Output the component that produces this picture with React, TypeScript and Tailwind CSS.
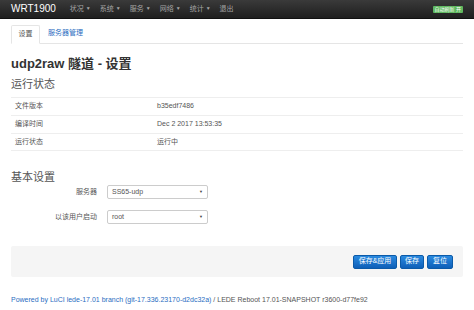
const font = { fontFamily: '"Liberation Sans", "Noto Sans CJK SC", sans-serif' };

const menu = ["状况", "系统", "服务", "网络", "统计"];

function Caret() {
  return <span className="ml-[2px] text-[5px] align-middle">▼</span>;
}

function Select({ value }: { value: string }) {
  return (
    <div className="flex h-[14px] w-[101px] items-center justify-between rounded-[2px] border border-[#ccc] bg-white px-[4px] text-[7px] text-[#555]">
      <span>{value}</span>
      <span className="text-[4px] text-[#444]">▼</span>
    </div>
  );
}

export default function App() {
  const rows = [
    ["文件版本", "b35edf7486"],
    ["编译时间", "Dec 2 2017 13:53:35"],
    ["运行状态", "运行中"],
  ];

  return (
    <div className="h-[310px] w-[474px] overflow-hidden bg-white text-[#333]" style={font}>
      {/* Navbar */}
      <div className="flex h-[19px] items-center border-b border-[#111] bg-gradient-to-b from-[#3a3a3a] to-[#1f1f1f] px-[11px]">
        <span className="mr-[14px] text-[10px] leading-none text-white">WRT1900</span>
        <div className="flex gap-[9px] text-[7px] text-[#a5a5a5]">
          {menu.map((m) => (
            <span key={m}>
              {m}
              <Caret />
            </span>
          ))}
          <span>退出</span>
        </div>
        <span className="ml-auto rounded-[1px] bg-[#5fb85f] px-[2px] text-[5px] leading-[7px] text-white">自动刷新 开</span>
      </div>

      <div className="px-[11px]">
        {/* Tabs */}
        <div className="mt-[6px] flex h-[19px] items-end border-b border-[#e5e5e5] text-[7px]">
          <div className="-mb-px flex h-[19px] w-[29px] items-center justify-center rounded-t-[2px] border border-b-white border-[#e5e5e5] bg-white text-[#555]">
            设置
          </div>
          <div className="flex h-[19px] items-center pl-[8px] text-[#2a6dbf]">服务器管理</div>
        </div>

        {/* Title */}
        <div className="mt-[12px] text-[13px] font-bold leading-[16px] text-[#333]">udp2raw 隧道 - 设置</div>

        <div className="mt-[6px] text-[11px] leading-[13px] text-[#555]">运行状态</div>

        <div className="mt-[6px] text-[7px] text-[#555]">
          {rows.map(([k, v], i) => (
            <div key={k} className={`flex h-[18px] items-center ${i < 2 ? "border-t border-[#eeeeee]" : "border-y border-[#eeeeee]"}`}>
              <span className="w-[146px] pl-[4px]">{k}</span>
              <span>{v}</span>
            </div>
          ))}
        </div>

        <div className="mt-[20px] text-[11px] leading-[13px] text-[#555]">基本设置</div>

        <div className="mt-[1px] flex flex-col gap-[11px] text-[7px] text-[#555]">
          <div className="flex items-center">
            <span className="w-[86px] text-right">服务器</span>
            <div className="ml-[10px]">
              <Select value="SS65-udp" />
            </div>
          </div>
          <div className="flex items-center">
            <span className="w-[86px] text-right">以该用户启动</span>
            <div className="ml-[10px]">
              <Select value="root" />
            </div>
          </div>
        </div>

        {/* Action bar */}
        <div className="mt-[22px] flex h-[31px] items-center justify-end gap-[3px] rounded-[2px] bg-[#f5f5f5] pr-[10px] text-[7px] text-white">
          <button className="h-[14px] w-[44px] rounded-[2px] border border-[#0b5aa8] bg-gradient-to-b from-[#2a8ae0] to-[#0e5fb8]">保存&应用</button>
          <button className="h-[14px] w-[24px] rounded-[2px] border border-[#0b5aa8] bg-gradient-to-b from-[#2a8ae0] to-[#0e5fb8]">保存</button>
          <button className="h-[14px] w-[26px] rounded-[2px] border border-[#0b5aa8] bg-gradient-to-b from-[#2a8ae0] to-[#0e5fb8]">复位</button>
        </div>

        {/* Footer */}
        <div className="mt-[18px] text-[7px] text-[#555]">
          <span className="text-[#2a6dbf]">Powered by LuCI lede-17.01 branch (git-17.336.23170-d2dc32a)</span> / LEDE Reboot 17.01-SNAPSHOT r3600-d77fe92
        </div>
      </div>
    </div>
  );
}
